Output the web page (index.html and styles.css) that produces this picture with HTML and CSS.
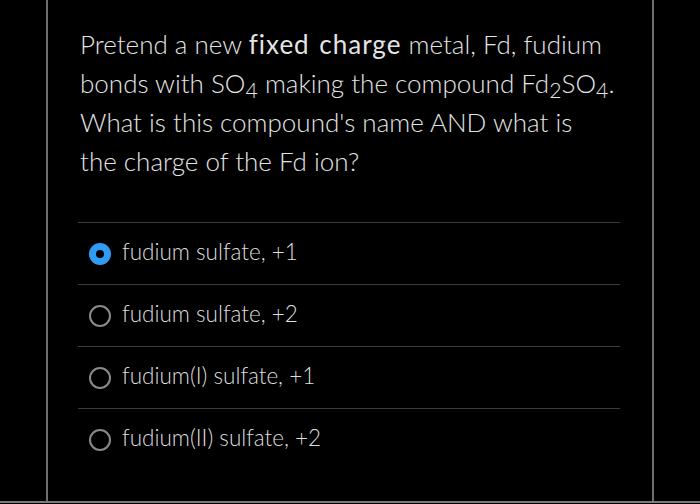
FILE: index.html
```html
<!DOCTYPE html>
<html>
<head>
<meta charset="utf-8">
<link rel="stylesheet" href="styles.css">
</head>
<body>
<div class="page">
  <div class="card">
    <p class="question">Pretend a new <span class="strong">fixed charge</span> metal, Fd, fudium bonds with SO<sub>4</sub> making the compound Fd<sub>2</sub>SO<sub>4</sub>. What is this compound's name AND what is<br>the charge of the Fd ion?</p>
    <ul class="options">
      <li class="option"><span class="radio selected"></span><span class="label">fudium sulfate, +1</span></li>
      <li class="option"><span class="radio"></span><span class="label">fudium sulfate, +2</span></li>
      <li class="option"><span class="radio"></span><span class="label">fudium(I) sulfate, +1</span></li>
      <li class="option"><span class="radio"></span><span class="label">fudium(II) sulfate, +2</span></li>
    </ul>
  </div>
</div>
</body>
</html>
```
FILE: styles.css
```css
html, body {
  margin: 0;
  padding: 0;
  background: #000;
}
body {
  font-family: Lato, "Open Sans", sans-serif;
  color: #e2e2e2;
}
.page {
  height: 501px;
  border-bottom: 2px solid #7a7a7a;
  box-sizing: content-box;
}
.card {
  margin: 0 46px;
  height: 100%;
  border-left: 2px solid #6e6e6e;
  border-right: 2px solid #6e6e6e;
  padding: 25px 20px 0 32px;
  box-sizing: border-box;
}
.question {
  margin: 0;
  font-size: 26px;
  line-height: 39px;
  font-weight: 300;
  color: #e4e4e4;
}
.strong {
  font-weight: 400;
  letter-spacing: 1px;
  word-spacing: 2px;
}
sub {
  font-size: 0.82em;
  vertical-align: -0.22em;
  line-height: 0;
}
.options {
  list-style: none;
  margin: 41px 12px 0 -2px;
  padding: 0;
}
.option {
  display: flex;
  align-items: center;
  gap: 11px;
  height: 62px;
  box-sizing: border-box;
  border-top: 1px solid #3c3c3c;
  padding-left: 11px;
  padding-bottom: 4px;
}
.radio {
  width: 22px;
  height: 22px;
  border-radius: 50%;
  border: 2.5px solid #8a8a8a;
  box-sizing: border-box;
  flex: none;
  margin-top: 4px;
}
.radio.selected {
  border: 7px solid #2f9cf3;
  background: #000;
}
.label {
  font-size: 22.5px;
  font-weight: 300;
  color: #dedede;
}
```
